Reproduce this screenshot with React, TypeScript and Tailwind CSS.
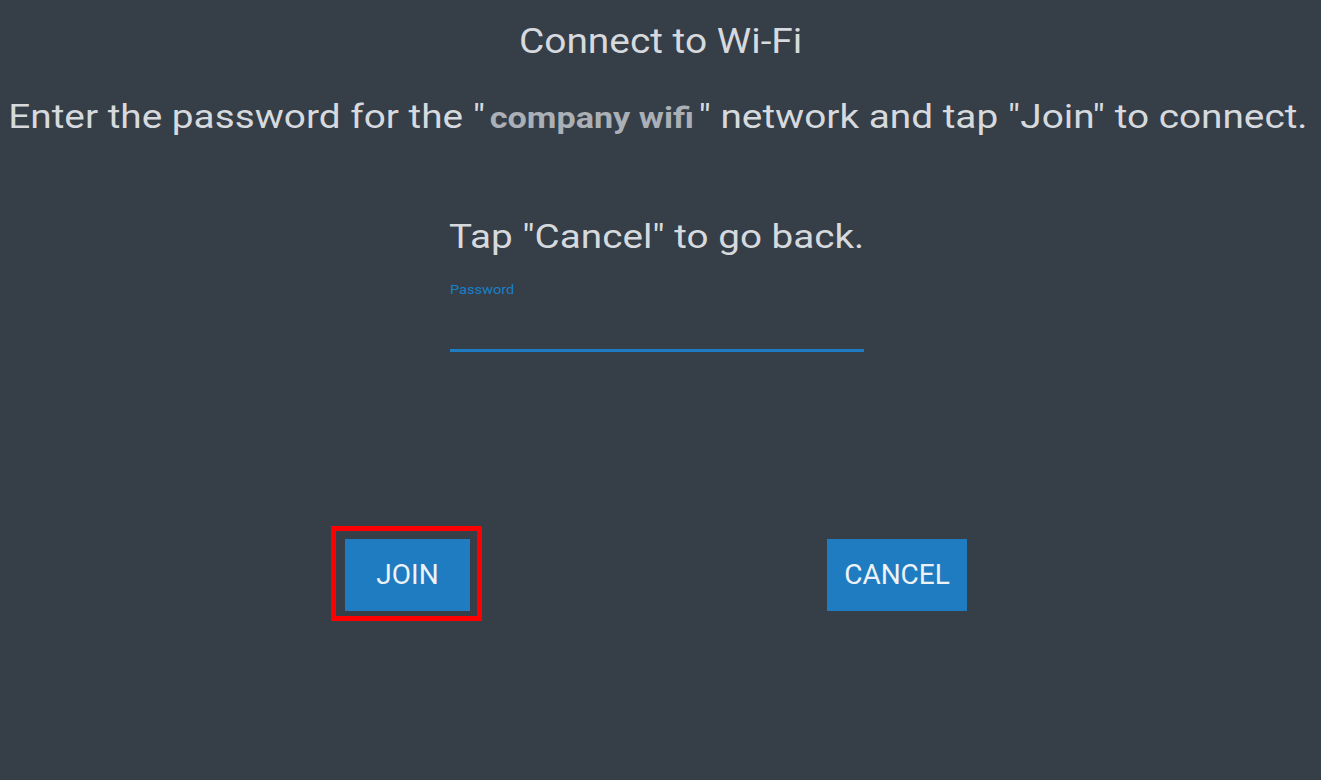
import React from "react";

export default function App() {
  return (
    <div
      className="w-[1321px] h-[780px] bg-[#363e47] flex flex-col items-center text-[#d6dade] overflow-hidden"
      style={{ fontFamily: "Roboto, 'Noto Sans', sans-serif" }}
    >
      <div className="mt-[20px] text-[35px] leading-[44px] scale-x-[1.11]">Connect to Wi-Fi</div>
      <div className="mt-[30px] mr-[6px] text-[34px] leading-[44px] whitespace-nowrap scale-x-[1.14]">
        Enter the password for the "<span className="ml-[4px] mr-[4px] font-bold text-[30px] text-[#aab0b6]">company wifi</span>" network and tap "Join" to connect.
      </div>
      <div className="mt-[74px] mr-[8px] text-[34px] leading-[44px] scale-x-[1.137]">Tap "Cancel" to go back.</div>
      <div className="mt-[25px] mr-[8px] w-[414px] flex flex-col">
        <div className="text-[13px] leading-[14px] text-[#1a7fc8] scale-x-[1.12] origin-left">Password</div>
        <div className="h-[52px]" />
        <div className="h-[3px] bg-[#1d7cc2]" />
      </div>
      <div className="mt-[174px] w-full flex">
        <div className="ml-[331px] border-[5px] border-[#ff0000] pl-[9px] pr-[7px] pt-[8px] pb-[5px]">
          <div className="w-[125px] h-[72px] bg-[#1f7cc0] flex items-center justify-center text-[28px] text-[#eef2f6]">
            JOIN
          </div>
        </div>
        <div className="ml-[345px] mt-[13px] w-[140px] h-[72px] bg-[#1f7cc0] flex items-center justify-center text-[28px] text-[#eef2f6]">
          CANCEL
        </div>
      </div>
    </div>
  );
}
